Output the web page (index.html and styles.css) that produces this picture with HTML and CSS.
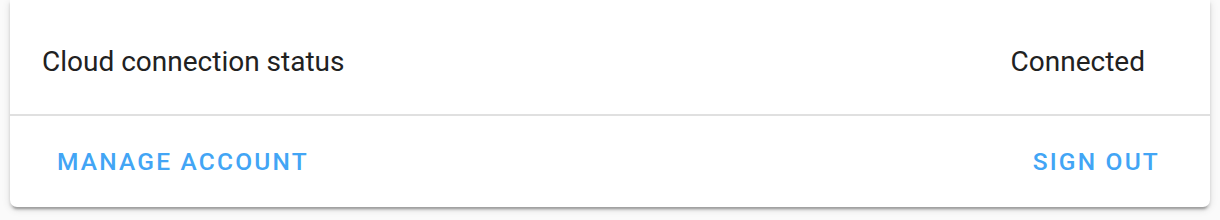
FILE: index.html
```html
<!DOCTYPE html>
<html lang="en">
<head>
    <meta charset="UTF-8">
    <title>Cloud account</title>
    <link rel="stylesheet" href="styles.css">
</head>
<body>
    <div class="card">
        <div class="status-row">
            <span class="status-label">Cloud connection status</span>
            <span class="status-value">Connected</span>
        </div>
        <div class="card-actions">
            <button class="btn">Manage account</button>
            <button class="btn">Sign out</button>
        </div>
    </div>
</body>
</html>
```

FILE: styles.css
```css
* {
    box-sizing: border-box;
    margin: 0;
    padding: 0;
}
body {
    font-family: Roboto, "Liberation Sans", sans-serif;
    background-color: #fafafa;
    width: 1220px;
    height: 220px;
    overflow: hidden;
}
.card {
    margin: 0 10px;
    background-color: white;
    border-radius: 0 0 7px 7px;
    box-shadow: 0 3px 3px rgba(0,0,0,0.14), 0 2px 9px rgba(0,0,0,0.12), 0 5px 2px -3px rgba(0,0,0,0.2);
}
.status-row {
    display: flex;
    justify-content: space-between;
    align-items: center;
    height: 116px;
    padding: 10px 65px 0 32px;
    font-size: 28px;
    line-height: 36px;
    color: #212121;
    border-bottom: 2px solid #e0e0e0;
}
.card-actions {
    display: flex;
    justify-content: space-between;
    align-items: center;
    height: 91px;
    padding: 0 50px 0 47px;
}
.btn {
    border: none;
    background: none;
    cursor: pointer;
    font-family: Roboto, "Liberation Sans", sans-serif;
    font-size: 24.5px;
    font-weight: 500;
    letter-spacing: 2.2px;
    text-transform: uppercase;
    color: #42a5f5;
}
```
